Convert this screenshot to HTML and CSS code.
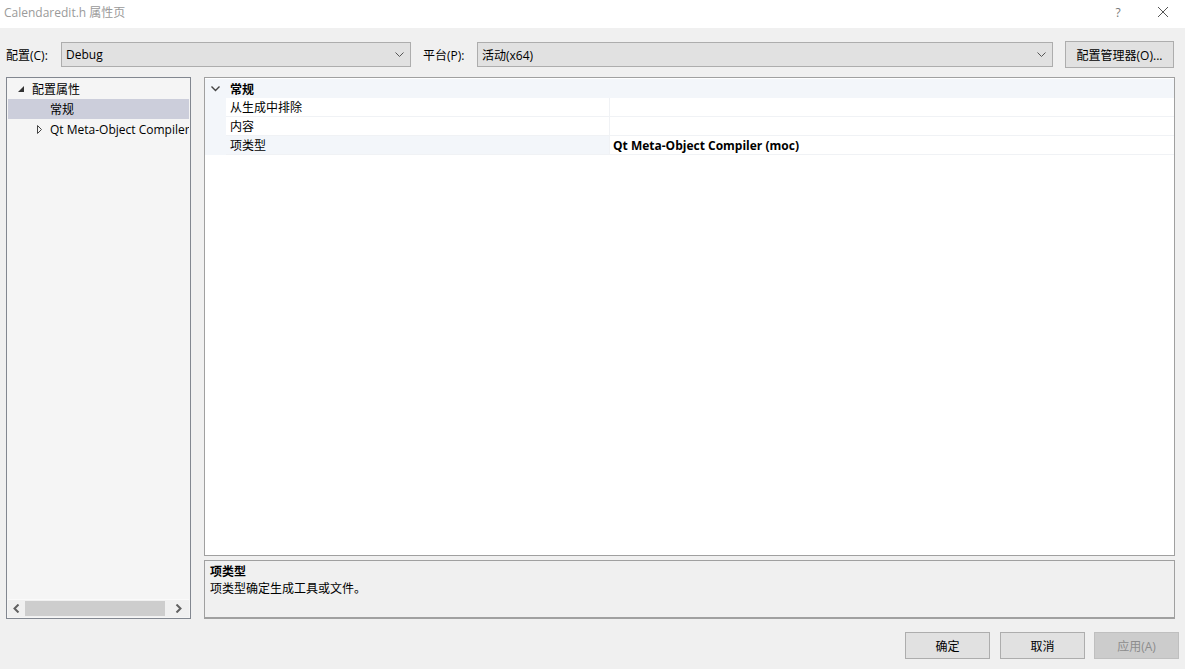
FILE: index.html
```html
<!DOCTYPE html>
<html>
<head>
  <title>Calendaredit.h 属性页</title>
  <link rel="stylesheet" href="styles.css">
</head>
<body>
  <div class="titlebar">
    <span class="title">Calendaredit.h 属性页</span>
    <span class="tb-btn help">?</span>
    <span class="tb-btn close">
      <svg width="12" height="12" viewBox="0 0 12 12"><path d="M1 1L11 11M11 1L1 11" stroke="#555" stroke-width="1" fill="none"/></svg>
    </span>
  </div>

  <div class="config-row">
    <span class="lbl lbl-config">配置(C):</span>
    <div class="combo combo-config">
      <span>Debug</span>
      <svg class="chev" width="9" height="6" viewBox="0 0 9 6"><path d="M0.5 0.5L4.5 4.5L8.5 0.5" stroke="#555" fill="none"/></svg>
    </div>
    <span class="lbl lbl-platform">平台(P):</span>
    <div class="combo combo-platform">
      <span>活动(x64)</span>
      <svg class="chev" width="9" height="6" viewBox="0 0 9 6"><path d="M0.5 0.5L4.5 4.5L8.5 0.5" stroke="#555" fill="none"/></svg>
    </div>
    <div class="btn btn-manager">配置管理器(O)...</div>
  </div>

  <div class="main">
    <div class="tree">
      <div class="tree-items">
        <div class="tree-row">
          <svg class="tri" width="6" height="6" viewBox="0 0 6 6"><path d="M6 0V6H0Z" fill="#333"/></svg>
          <span class="lvl0">配置属性</span>
        </div>
        <div class="tree-row selected"><span class="lvl1">常规</span></div>
        <div class="tree-row">
          <svg class="tri-open" width="5" height="9" viewBox="0 0 5 9"><path d="M0.5 0.5L4.5 4.5L0.5 8.5Z" stroke="#444" fill="none"/></svg>
          <span class="lvl1b">Qt Meta-Object Compiler (moc)</span>
        </div>
      </div>
      <div class="hscroll">
        <svg width="7" height="9" viewBox="0 0 7 9"><path d="M5.5 0.5L1.5 4.5L5.5 8.5" stroke="#606060" stroke-width="2" fill="none"/></svg>
        <div class="track"><div class="thumb"></div></div>
        <svg width="7" height="9" viewBox="0 0 7 9"><path d="M1.5 0.5L5.5 4.5L1.5 8.5" stroke="#606060" stroke-width="2" fill="none"/></svg>
      </div>
    </div>

    <div class="right">
      <div class="grid">
        <div class="grid-cat">
          <svg class="cat-chev" width="9" height="6" viewBox="0 0 9 6"><path d="M0.5 0.5L4.5 4.5L8.5 0.5" stroke="#444" stroke-width="1.4" fill="none"/></svg>
          <span>常规</span>
        </div>
        <div class="grid-row">
          <div class="gutter"></div>
          <div class="name">从生成中排除</div>
          <div class="value"></div>
        </div>
        <div class="grid-row">
          <div class="gutter"></div>
          <div class="name">内容</div>
          <div class="value"></div>
        </div>
        <div class="grid-row active">
          <div class="gutter"></div>
          <div class="name">项类型</div>
          <div class="value bold">Qt Meta-Object Compiler (moc)</div>
        </div>
      </div>
      <div class="desc">
        <div class="desc-title">项类型</div>
        <div class="desc-text">项类型确定生成工具或文件。</div>
      </div>
    </div>
  </div>

  <div class="footer">
    <div class="btn btn-ok">确定</div>
    <div class="btn btn-cancel">取消</div>
    <div class="btn btn-apply disabled">应用(A)</div>
  </div>
</body>
</html>
```

FILE: styles.css
```css
body {
  margin: 0;
  width: 1185px;
  height: 669px;
  overflow: hidden;
  background: #f0f0f0;
  font-family: "Open Sans", "Noto Sans CJK SC", sans-serif;
  font-size: 12px;
  color: #000;
}
.titlebar {
  height: 28px;
  background: #fff;
  display: flex;
  align-items: center;
  padding-left: 4px;
}
.title {
  color: #9a9a9a;
  flex: 1;
  margin-top: -4px;
}
.tb-btn {
  color: #777;
  display: flex;
  align-items: center;
  justify-content: center;
  margin-top: -4px;
}
.help {
  width: 20px;
  margin-right: 25px;
}
.close {
  width: 20px;
  margin-right: 12px;
}

.config-row {
  display: flex;
  align-items: center;
  margin-top: 13px;
  padding-left: 6px;
  height: 27px;
}
.lbl-config {
  width: 55px;
}
.lbl-platform {
  width: 54px;
  margin-left: 12px;
}
.combo {
  box-sizing: border-box;
  height: 25px;
  background: #e1e1e1;
  border: 1px solid #adadad;
  display: flex;
  align-items: center;
  padding: 0 6px 0 4px;
  justify-content: space-between;
}
.combo-config {
  width: 350px;
}
.combo-platform {
  width: 576px;
}
.btn {
  box-sizing: border-box;
  background: #e1e1e1;
  border: 1px solid #adadad;
  display: flex;
  align-items: center;
  justify-content: center;
}
.btn-manager {
  width: 109px;
  height: 27px;
  margin-left: 12px;
}

.main {
  display: flex;
  margin-top: 9px;
  padding-left: 6px;
  height: 542px;
}
.tree {
  box-sizing: border-box;
  width: 185px;
  border: 1px solid #828790;
  background: #f5f5f5;
  display: flex;
  flex-direction: column;
  padding: 1px;
}
.tree-items {
  flex: 1;
  overflow: hidden;
}
.tree-row {
  height: 20px;
  display: flex;
  align-items: center;
  white-space: nowrap;
}
.tree-row svg {
  flex-shrink: 0;
}
.tree-row.selected {
  background: #cccedb;
}
.tri {
  margin-left: 10px;
  margin-right: 8px;
}
.tri-open {
  margin-left: 29px;
  margin-right: 8px;
}
.lvl1 {
  margin-left: 42px;
}
.hscroll {
  height: 17px;
  display: flex;
  align-items: center;
  background: #f0f0f0;
  border-top: 1px solid #fafafa;
  padding: 0 7px 0 5px;
  gap: 5px;
}
.track {
  flex: 1;
  height: 15px;
}
.thumb {
  width: 140px;
  height: 15px;
  background: #cdcdcd;
}

.right {
  margin-left: 13px;
  width: 971px;
  display: flex;
  flex-direction: column;
}
.grid {
  box-sizing: border-box;
  height: 479px;
  background: #fff;
  border: 1px solid #a0a0a0;
}
.grid-cat {
  height: 19px;
  margin-top: 1px;
  background: #f3f6fa;
  display: flex;
  align-items: center;
  font-weight: bold;
}
.cat-chev {
  margin-left: 6px;
  margin-right: 10px;
}
.grid-row {
  display: flex;
  height: 19px;
}
.gutter {
  width: 21px;
  background: #f3f6fa;
}
.name {
  box-sizing: border-box;
  width: 384px;
  padding: 2px 0 0 4px;
  line-height: 16px;
  border-bottom: 1px solid #f0f2f5;
  border-right: 1px solid #f0f2f5;
}
.value {
  box-sizing: border-box;
  flex: 1;
  padding: 2px 0 0 3px;
  line-height: 16px;
  border-bottom: 1px solid #f0f2f5;
}
.grid-row.active .name {
  background: #f3f6fa;
}
.bold {
  font-weight: bold;
}
.desc {
  box-sizing: border-box;
  margin-top: 4px;
  flex: 1;
  border: 1px solid #a0a0a0;
  border-bottom: 2px solid #a0a0a0;
  padding: 2px 5px;
  line-height: 17px;
}
.desc-title {
  font-weight: bold;
}

.footer {
  display: flex;
  justify-content: flex-end;
  margin-top: 13px;
  padding-right: 6px;
}
.footer .btn {
  width: 85px;
  height: 27px;
}
.btn-cancel {
  margin-left: 10px;
}
.btn-apply {
  margin-left: 9px;
}
.btn.disabled {
  background: #cccccc;
  border-color: #bfbfbf;
  color: #8d8d8d;
}
```
